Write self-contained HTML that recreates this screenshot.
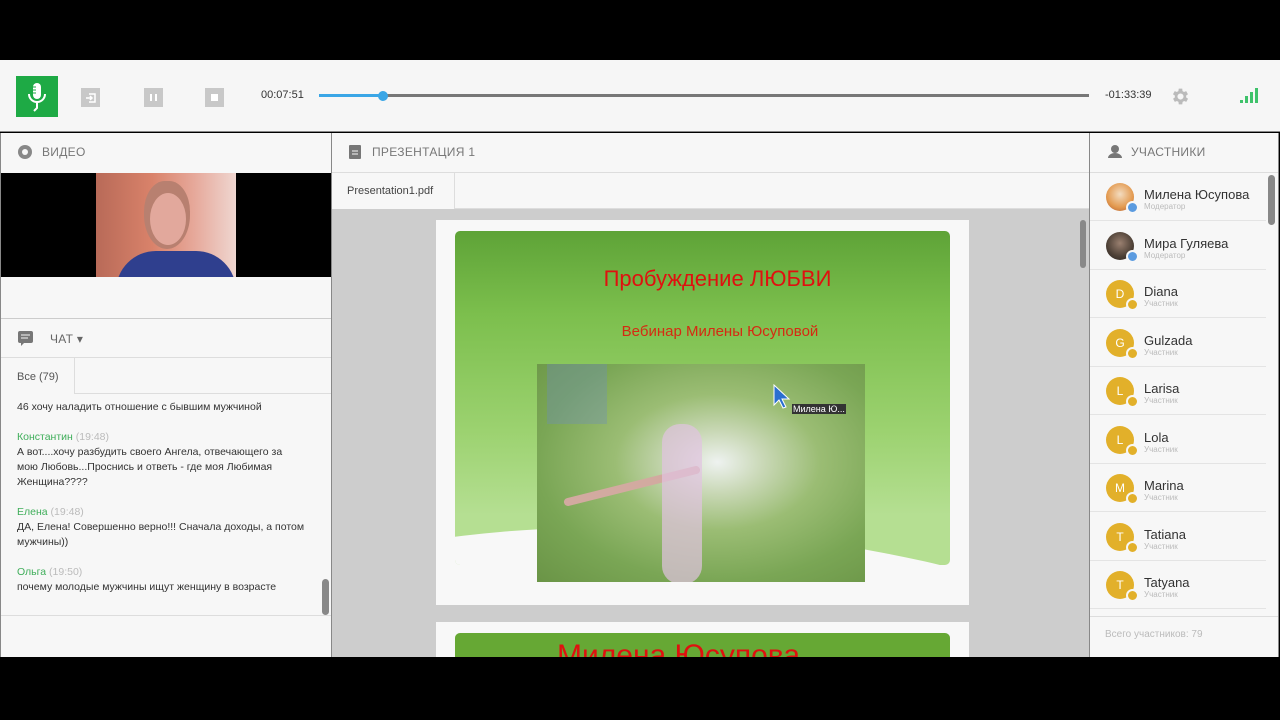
<!DOCTYPE html>
<html><head><meta charset="utf-8">
<style>
*{margin:0;padding:0;box-sizing:border-box}
body{width:1280px;height:720px;background:#000;position:relative;overflow:hidden;font-family:"Liberation Sans","DejaVu Sans",sans-serif;color:#444}
.abs{position:absolute}
.top{left:0;top:60px;width:1280px;height:72px;background:#f6f6f6;border-bottom:1px solid #888}
.hdr{font-size:12px;color:#777;letter-spacing:.3px}
.panel{background:#f7f7f7;top:133px;height:524px;overflow:hidden}
.row{position:absolute;left:0;width:176px;height:48px;border-bottom:1px solid #e4e4e4}
.av{position:absolute;left:16px;top:10px;width:28px;height:28px;border-radius:50%;background:#e2b02a;color:#fff;font-size:12px;text-align:center;line-height:28px}
.bd{position:absolute;left:36px;top:28px;width:13px;height:13px;border-radius:50%;background:#e2b02a;border:2px solid #f7f7f7}
.bd.b{background:#5b9be0}
.nm{position:absolute;left:54px;top:14px;font-size:13px;color:#333}
.rl{position:absolute;left:54px;top:29px;font-size:8px;color:#bbb}
.msg{font-size:10.5px;color:#333;line-height:15px}
.g{color:#3fae5a}
.t{color:#bbb}
</style></head><body>
<div class="abs top">
  <div class="abs" style="left:16px;top:16px;width:42px;height:41px;background:#1eaa45">
    <svg width="42" height="41" viewBox="0 0 42 41"><rect x="17" y="7" width="8" height="16" rx="4" fill="#fff"/><path d="M13 18a8 8 0 0 0 16 0" stroke="#fff" stroke-width="2" fill="none"/><path d="M21 26v6l-3 3" stroke="#fff" stroke-width="2" fill="none"/><g stroke="#1eaa45" stroke-width="1"><line x1="17" y1="11" x2="20" y2="11"/><line x1="17" y1="14" x2="20" y2="14"/><line x1="17" y1="17" x2="20" y2="17"/></g></svg>
  </div>
  <div class="abs" style="left:81px;top:28px;width:19px;height:19px;background:#c8c8c8"><svg width="19" height="19"><path d="M8 6h6v8H8M5 10h6M9 8l2 2-2 2" stroke="#fff" stroke-width="1.5" fill="none"/></svg></div>
  <div class="abs" style="left:144px;top:28px;width:19px;height:19px;background:#c8c8c8"><div class="abs" style="left:6px;top:6px;width:2px;height:7px;background:#fff"></div><div class="abs" style="left:11px;top:6px;width:2px;height:7px;background:#fff"></div></div>
  <div class="abs" style="left:205px;top:28px;width:19px;height:19px;background:#c8c8c8"><div class="abs" style="left:6px;top:6px;width:7px;height:7px;background:#fff"></div></div>
  <div class="abs" style="left:261px;top:29px;font-size:11px;color:#333">00:07:51</div>
  <div class="abs" style="left:319px;top:34px;width:65px;height:3px;background:#3aa6e6"></div>
  <div class="abs" style="left:384px;top:34px;width:705px;height:3px;background:#777"></div>
  <div class="abs" style="left:378px;top:31px;width:10px;height:10px;border-radius:50%;background:#3aa6e6"></div>
  <div class="abs" style="left:1105px;top:29px;font-size:11px;color:#333">-01:33:39</div>
  <div class="abs" style="left:1170px;top:26px"><svg width="21" height="21" viewBox="0 0 24 24"><path fill="#bbb" d="M19.4 13a7.5 7.5 0 0 0 0-2l2.1-1.6-2-3.5-2.5 1a7 7 0 0 0-1.7-1L15 3h-4l-.4 2.9a7 7 0 0 0-1.7 1l-2.5-1-2 3.5L6.6 11a7.5 7.5 0 0 0 0 2l-2.1 1.6 2 3.5 2.5-1a7 7 0 0 0 1.7 1L11 21h4l.4-2.9a7 7 0 0 0 1.7-1l2.5 1 2-3.5zM13 15.5a3.5 3.5 0 1 1 0-7 3.5 3.5 0 0 1 0 7z" transform="translate(-1 0)"/></svg></div>
  <div class="abs" style="left:1240px;top:40px;width:3px;height:3px;background:#3ec26a"></div>
  <div class="abs" style="left:1245px;top:36px;width:3px;height:7px;background:#3ec26a"></div>
  <div class="abs" style="left:1250px;top:32px;width:3px;height:11px;background:#3ec26a"></div>
  <div class="abs" style="left:1255px;top:28px;width:3px;height:15px;background:#3ec26a"></div>
</div>

<!-- left -->
<div class="abs panel" style="left:1px;width:330px;background:#f7f7f7">
  <div class="abs" style="left:17px;top:12px;width:14px;height:14px;border-radius:50%;background:#888"><div class="abs" style="left:4px;top:4px;width:6px;height:6px;border-radius:50%;background:#f7f7f7"></div></div>
  <div class="abs hdr" style="left:41px;top:12px">ВИДЕО</div>
  <div class="abs" style="left:0;top:40px;width:330px;height:104px;background:#000"></div>
  <div class="abs" style="left:95px;top:40px;width:140px;height:104px;background:linear-gradient(90deg,#b86a58,#d9826a 40%,#e6a89a 70%,#efd6d0);overflow:hidden">
    <div class="abs" style="left:20px;top:78px;width:120px;height:40px;border-radius:40px 40px 0 0;background:#2f3f8e"></div>
    <div class="abs" style="left:48px;top:8px;width:46px;height:68px;border-radius:45% 45% 50% 50%;background:#b88070"></div>
    <div class="abs" style="left:54px;top:20px;width:36px;height:52px;border-radius:50%;background:#e2a89c"></div>
  </div>
  <div class="abs" style="left:0;top:185px;width:330px;height:1px;background:#ccc"></div>
  <svg class="abs" style="left:17px;top:198px" width="15" height="15"><rect x="0" y="0" width="15" height="12" rx="2" fill="#777"/><path d="M3 12l0 3 3-3" fill="#777"/><g stroke="#f7f7f7"><line x1="3" y1="4" x2="12" y2="4"/><line x1="3" y1="7" x2="10" y2="7"/></g></svg>
  <div class="abs hdr" style="left:49px;top:199px;color:#666">ЧАТ ▾</div>
  <div class="abs" style="left:0;top:224px;width:330px;height:1px;background:#ddd"></div>
  <div class="abs" style="left:73px;top:224px;width:1px;height:36px;background:#ddd"></div>
  <div class="abs" style="left:73px;top:260px;width:257px;height:1px;background:#ddd"></div>
  <div class="abs" style="left:16px;top:238px;font-size:11px;color:#555">Все (79)</div>
  <div class="abs msg" style="left:16px;top:267px;width:288px">
    <div>46 хочу наладить отношение с бывшим мужчиной</div>
    <div style="margin-top:15px"><span class="g">Константин</span> <span class="t">(19:48)</span></div>
    <div>А вот....хочу разбудить своего Ангела, отвечающего за мою Любовь...Проснись и ответь - где моя Любимая Женщина????</div>
    <div style="margin-top:15px"><span class="g">Елена</span> <span class="t">(19:48)</span></div>
    <div>ДА, Елена! Совершенно верно!!! Сначала доходы, а потом мужчины))</div>
    <div style="margin-top:15px"><span class="g">Ольга</span> <span class="t">(19:50)</span></div>
    <div>почему молодые мужчины ищут женщину в возрасте</div>
  </div>
  <div class="abs" style="left:321px;top:446px;width:7px;height:36px;border-radius:4px;background:#888"></div>
  <div class="abs" style="left:0;top:482px;width:330px;height:1px;background:#ddd"></div>
</div>
<div class="abs" style="left:331px;top:133px;width:1px;height:524px;background:#888"></div>

<!-- middle -->
<div class="abs panel" style="left:332px;width:757px">
  <svg class="abs" style="left:17px;top:12px" width="12" height="14"><rect width="12" height="14" rx="1" fill="#777"/><g stroke="#f7f7f7"><line x1="3" y1="6" x2="9" y2="6"/><line x1="3" y1="9" x2="9" y2="9"/></g></svg>
  <div class="abs hdr" style="left:40px;top:12px">ПРЕЗЕНТАЦИЯ 1</div>
  <div class="abs" style="left:0;top:39px;width:757px;height:1px;background:#ddd"></div>
  <div class="abs" style="left:15px;top:52px;font-size:11px;color:#444">Presentation1.pdf</div>
  <div class="abs" style="left:122px;top:40px;width:1px;height:36px;background:#ddd"></div>
  <div class="abs" style="left:122px;top:75px;width:635px;height:1px;background:#ddd"></div>
  <div class="abs" style="left:0;top:76px;width:757px;height:448px;background:#cdcdcd;overflow:hidden">
    <div class="abs" style="left:104px;top:11px;width:533px;height:385px;background:#f8f8f8"></div>
    <div class="abs" style="left:123px;top:22px;width:495px;height:334px;border-radius:5px;background:linear-gradient(180deg,#5ea337 0%,#7cbf4d 25%,#9cd270 60%,#b5df92 85%);overflow:hidden">
      <div class="abs" style="left:-200px;top:300px;width:900px;height:260px;border-radius:50%;background:#f8f8f8;transform:rotate(4deg)"></div>
      <div class="abs" style="left:0;top:35px;width:525px;text-align:center;font-size:22px;color:#e0100f">Пробуждение ЛЮБВИ</div>
      <div class="abs" style="left:0;top:92px;width:530px;text-align:center;font-size:15px;color:#d62a12">Вебинар Милены Юсуповой</div>
    </div>
    <div class="abs" style="left:205px;top:155px;width:328px;height:218px;background:radial-gradient(ellipse at 55% 45%,#eef2f0 0%,#c9d8b6 18%,#9bbd74 40%,#7aa655 70%,#6a9446 100%);overflow:hidden">
      <div class="abs" style="left:10px;top:0;width:60px;height:60px;background:rgba(110,140,190,.35)"></div>
      <div class="abs" style="left:25px;top:118px;width:140px;height:8px;transform:rotate(-14deg);background:#d2aaa0;border-radius:4px"></div>
      <div class="abs" style="left:125px;top:60px;width:40px;height:160px;background:rgba(225,195,225,.7);border-radius:18px"></div>
      <svg class="abs" style="left:236px;top:20px" width="18" height="26"><path d="M1 1v20l5-5 4 8 3-1-4-8h7z" fill="#2b6fd0" stroke="#fff"/></svg>
      <div class="abs" style="left:255px;top:40px;font-size:9px;color:#fff;background:#333;padding:0 1px">Милена Ю...</div>
    </div>
    <div class="abs" style="left:104px;top:413px;width:533px;height:35px;background:#f8f8f8"></div>
    <div class="abs" style="left:123px;top:424px;width:495px;height:24px;border-radius:5px 5px 0 0;background:#66a834;overflow:hidden">
      <div class="abs" style="left:102px;top:6px;font-size:30px;line-height:34px;color:#e0100f;white-space:nowrap">Милена Юсупова</div>
    </div>
    <div class="abs" style="left:748px;top:11px;width:6px;height:48px;border-radius:3px;background:#888"></div>
  </div>
</div>
<div class="abs" style="left:1089px;top:133px;width:1px;height:524px;background:#888"></div>

<!-- right -->
<div class="abs panel" style="left:1090px;width:188px">
  <svg class="abs" style="left:17px;top:11px" width="16" height="16"><circle cx="8" cy="5" r="4" fill="#777"/><path d="M1 14a7 5 0 0 1 14 0z" fill="#777"/></svg>
  <div class="abs hdr" style="left:41px;top:12px">УЧАСТНИКИ</div>
  <div class="abs" style="left:0;top:39px;width:188px;height:1px;background:#ddd"></div>
  <div class="abs" style="left:0;top:40px;width:176px;height:440px;overflow:hidden">
    <div class="row" style="top:0"><div class="av" style="background:radial-gradient(circle at 50% 40%,#f3dcc0,#e39a50 60%,#b05a2e)"></div><div class="bd b"></div><div class="nm">Милена Юсупова</div><div class="rl">Модератор</div></div>
    <div class="row" style="top:48.5px"><div class="av" style="background:radial-gradient(circle at 50% 40%,#9a8070,#4d4036 60%,#2a2420)"></div><div class="bd b"></div><div class="nm">Мира Гуляева</div><div class="rl">Модератор</div></div>
    <div class="row" style="top:97px"><div class="av">D</div><div class="bd"></div><div class="nm">Diana</div><div class="rl">Участник</div></div>
    <div class="row" style="top:145.5px"><div class="av">G</div><div class="bd"></div><div class="nm">Gulzada</div><div class="rl">Участник</div></div>
    <div class="row" style="top:194px"><div class="av">L</div><div class="bd"></div><div class="nm">Larisa</div><div class="rl">Участник</div></div>
    <div class="row" style="top:242.5px"><div class="av">L</div><div class="bd"></div><div class="nm">Lola</div><div class="rl">Участник</div></div>
    <div class="row" style="top:291px"><div class="av">M</div><div class="bd"></div><div class="nm">Marina</div><div class="rl">Участник</div></div>
    <div class="row" style="top:339.5px"><div class="av">T</div><div class="bd"></div><div class="nm">Tatiana</div><div class="rl">Участник</div></div>
    <div class="row" style="top:388px"><div class="av">T</div><div class="bd"></div><div class="nm">Tatyana</div><div class="rl">Участник</div></div>
  </div>
  <div class="abs" style="left:178px;top:42px;width:7px;height:50px;border-radius:4px;background:#888"></div>
  <div class="abs" style="left:0;top:483px;width:188px;height:1px;background:#ddd"></div>
  <div class="abs" style="left:15px;top:496px;font-size:10px;color:#bbb">Всего участников: 79</div>
</div>
<div class="abs" style="left:1278px;top:133px;width:1px;height:524px;background:#888"></div>
<div class="abs" style="left:0;top:133px;width:1px;height:524px;background:#888"></div>
</body></html>
